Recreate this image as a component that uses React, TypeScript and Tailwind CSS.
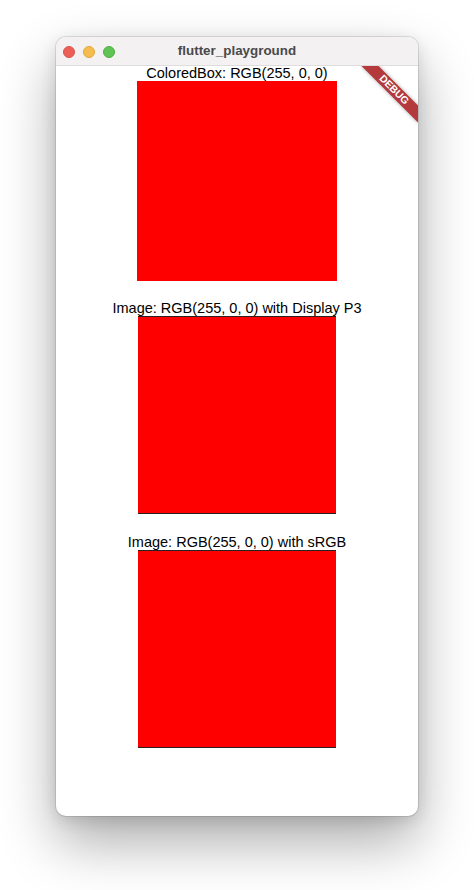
import React from "react";

export default function App() {
  const font = { fontFamily: '"Liberation Sans", Arial, sans-serif' };
  return (
    <div className="w-[474px] h-[890px] bg-white flex justify-center pt-[37px]" style={font}>
      <div className="w-[362px] h-[779px] rounded-[10px] overflow-hidden flex flex-col bg-white shadow-[0_26px_56px_rgba(0,0,0,0.33),0_4px_16px_rgba(0,0,0,0.12),0_0_0_1px_rgba(0,0,0,0.1)]">
        <div className="h-[29px] shrink-0 bg-[#f3f1f2] border-b border-[#dedcdd] relative flex items-center justify-center">
          <div className="absolute left-[7px] top-[9px] flex gap-[8px]">
            <span className="w-[12px] h-[12px] rounded-full bg-[#ec5f57] border border-[#d9534b]" />
            <span className="w-[12px] h-[12px] rounded-full bg-[#f5bd4f] border border-[#dea63a]" />
            <span className="w-[12px] h-[12px] rounded-full bg-[#5fc453] border border-[#4fae43]" />
          </div>
          <span className="text-[13.4px] font-bold text-[#4a494a] leading-none">flutter_playground</span>
        </div>
        <div className="relative flex-1 overflow-hidden flex flex-col items-center text-black">
          <div className="h-[15px] leading-[15px] text-[14.5px] whitespace-nowrap">ColoredBox: RGB(255, 0, 0)</div>
          <div className="w-[200px] h-[200px] bg-[#ff0000]" />
          <div className="mt-[20px] h-[15px] leading-[15px] text-[14.5px] whitespace-nowrap relative z-0">
            Image: RGB(255, 0, 0) with Display P3
          </div>
          <div className="w-[198px] h-[198px] bg-[#ff0000] border-y border-[#2b2020] relative z-10" />
          <div className="mt-[21px] h-[15px] leading-[15px] text-[14.5px] whitespace-nowrap">
            Image: RGB(255, 0, 0) with sRGB
          </div>
          <div className="w-[198px] h-[198px] bg-[#ff0000] border-y border-[#2b2020]" />
          <div className="absolute right-[-16px] top-[18px] w-[80px] h-[12px] rotate-45 bg-[#b3393c] shadow-[0_0_4px_rgba(0,0,0,0.35)] flex items-center justify-center">
            <span className="text-[10.2px] font-bold text-white leading-none">DEBUG</span>
          </div>
        </div>
      </div>
    </div>
  );
}
